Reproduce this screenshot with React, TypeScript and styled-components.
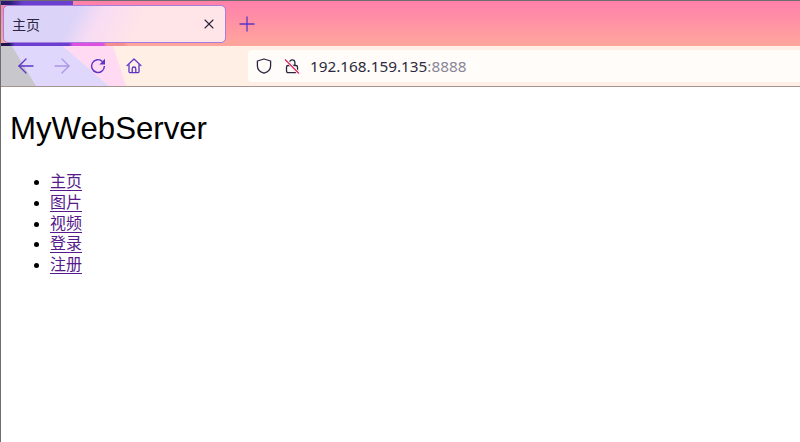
import React from "react";
import styled, { createGlobalStyle } from "styled-components";
import { ArrowLeft, ArrowRight, Plus, X } from "lucide-react";

const GlobalStyle = createGlobalStyle`
  html, body {
    margin: 0;
    padding: 0;
    height: 100%;
    background: #fff;
  }
  #root {
    height: 100%;
  }
`;

const Window = styled.div`
  width: 800px;
  height: 442px;
  box-sizing: border-box;
  border-left: 1px solid #6e6e6e;
  border-top: 1px solid #6e6e6e;
  display: flex;
  flex-direction: column;
  overflow: hidden;
  font-family: "Liberation Sans", "Noto Sans CJK SC", sans-serif;
`;

const Chrome = styled.div`
  flex-shrink: 0;
  border-bottom: 1px solid #a8948c;
`;

const TabBar = styled.div`
  height: 45px;
  box-sizing: border-box;
  padding: 4px 0 3px 2px;
  display: flex;
  align-items: stretch;
  background:
    linear-gradient(90deg, #2a1a70 0 8px, #6a3fd0 22px 72px, transparent 72px) top / 100% 4px no-repeat,
    linear-gradient(90deg, #1e1250 0 8px, #6a3fd0 14px 68px, #e050e0 72px 102px, #f58f8f 106px 122px, transparent 128px) bottom / 100% 3px no-repeat,
    linear-gradient(180deg, #ff80ab 0%, #ffa69c 100%);
`;

const Tab = styled.div`
  width: 223px;
  box-sizing: border-box;
  display: flex;
  align-items: center;
  justify-content: space-between;
  padding: 0 8px 0 8px;
  border: 1px solid #a57ee0;
  border-radius: 5px;
  background: linear-gradient(118deg, #dcd4f8 0 32%, #f8dcf4 42%, #ffe4e8 60%);
  color: #2a2540;
  font-family: "Noto Sans CJK SC", sans-serif;
  font-size: 14px;
`;

const NewTab = styled.div`
  width: 42px;
  display: flex;
  align-items: center;
  justify-content: center;
  color: #5b34c8;
`;

const Toolbar = styled.div`
  position: relative;
  height: 40px;
  box-sizing: border-box;
  display: flex;
  align-items: center;
  padding-left: 7px;
  background: #ffefe4;
`;

const ToolbarArt = styled.svg`
  position: absolute;
  left: 0;
  top: 0;
  width: 140px;
  height: 40px;
`;

const NavButton = styled.div<{ $faded?: boolean }>`
  position: relative;
  width: 36px;
  display: flex;
  justify-content: center;
  color: #5b34c8;
  opacity: ${({ $faded }) => ($faded ? 0.4 : 1)};
`;

const UrlBar = styled.div`
  position: relative;
  margin-left: 96px;
  flex: 1;
  height: 32px;
  box-sizing: border-box;
  display: flex;
  align-items: center;
  gap: 12px;
  padding-left: 8px;
  background: #fffcf9;
  border-radius: 4px 0 0 4px;
  color: #2a2540;
`;

const UrlText = styled.span`
  margin-left: -2px;
  font-family: "Noto Sans", sans-serif;
  font-size: 15.3px;
  color: #2a2a3c;
`;

const UrlPort = styled.span`
  color: #8a8698;
`;

const Page = styled.main`
  flex: 1;
  padding: 8px 9px;
  color: #000;
`;

const Title = styled.h1`
  margin: 15px 0 0;
  font-size: 31.2px;
  font-weight: 400;
  line-height: 37px;
`;

const Menu = styled.ul`
  margin: 25px 0 0;
  padding-left: 40px;
  font-size: 16px;
  line-height: 20.8px;
`;

const MenuLink = styled.a`
  color: #551a8b;
  text-decoration: underline;
  text-underline-offset: 3px;
`;

const links = ["主页", "图片", "视频", "登录", "注册"];

const App: React.FC = () => (
  <Window>
    <GlobalStyle />
    <Chrome>
      <TabBar>
        <Tab>
          <span>主页</span>
          <X size={16} strokeWidth={1.6} />
        </Tab>
        <NewTab>
          <Plus size={24} strokeWidth={1.3} />
        </NewTab>
      </TabBar>
      <Toolbar>
        <ToolbarArt viewBox="0 0 140 40">
          <polygon points="0,0 62,0 108,40 0,40" fill="#e0d8fc" />
          <polygon points="62,0 112,0 125,40 108,40" fill="#ffdaf2" />
          <polygon points="0,0 11,0 35,40 0,40" fill="#c8c8cc" />
        </ToolbarArt>
        <NavButton><ArrowLeft size={24} strokeWidth={1.3} /></NavButton>
        <NavButton $faded><ArrowRight size={24} strokeWidth={1.3} /></NavButton>
        <NavButton>
          <svg width="16" height="16" viewBox="0 0 16 16" fill="none">
            <path d="M14.4 8a6.4 6.4 0 1 1-2-4.6" stroke="currentColor" strokeWidth="1.4" />
            <path d="M15 .8v5.6H9.4z" fill="currentColor" />
          </svg>
        </NavButton>
        <NavButton>
          <svg width="16" height="16" viewBox="0 0 16 16" fill="none" stroke="currentColor" strokeWidth="1.3" strokeLinejoin="round">
            <path d="M1 7.6 8 1l7 6.6" strokeLinecap="round" />
            <path d="M3 6.2v7.3a1.2 1.2 0 0 0 1.2 1.2h7.6a1.2 1.2 0 0 0 1.2-1.2V6.2" />
            <path d="M6.2 14.7v-3.9a1.8 1.8 0 0 1 3.6 0v3.9" />
          </svg>
        </NavButton>
        <UrlBar>
          <svg width="16" height="16" viewBox="0 0 16 16" fill="none">
            <path d="M8 1 14.6 3v5c0 3.4-3 6-6.6 7.2C4.4 14 1.4 11.4 1.4 8V3z" stroke="#2a2540" strokeWidth="1.3" strokeLinejoin="round" />
          </svg>
          <svg width="16" height="16" viewBox="0 0 16 16" fill="none">
            <path d="M5.5 7.5v-3a2.7 2.700 0 0 1 5.400 0v3" stroke="#2a2540" strokeWidth="1.3" />
            <rect x="2.5" y="7.5" width="11" height="7.2" rx="1.6" stroke="#2a2540" strokeWidth="1.3" />
            <path d="M1 1 15 15.500" stroke="#fffcf9" strokeWidth="3" />
            <path d="M1 1.500 15 15.500" stroke="#e0205e" strokeWidth="1.2" />
          </svg>
          <UrlText>192.168.159.135<UrlPort>:8888</UrlPort></UrlText>
        </UrlBar>
      </Toolbar>
    </Chrome>
    <Page>
      <Title>MyWebServer</Title>
      <Menu>
        {links.map((label) => (
          <li key={label}><MenuLink href="#">{label}</MenuLink></li>
        ))}
      </Menu>
    </Page>
  </Window>
);

export default App;
